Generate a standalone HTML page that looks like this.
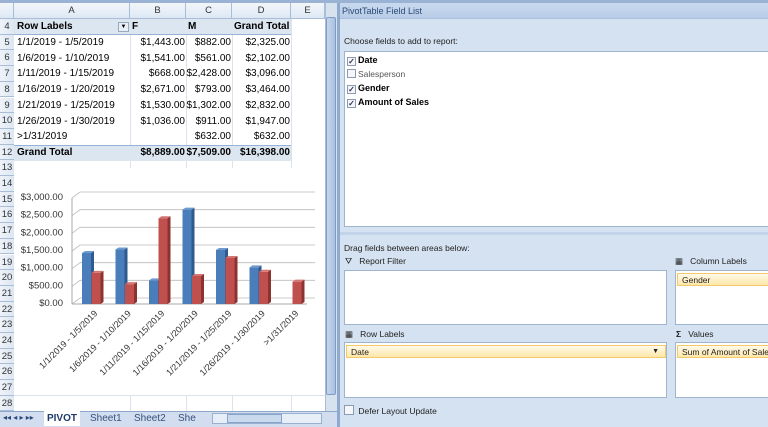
<!DOCTYPE html>
<html><head><meta charset="utf-8"><style>
*{margin:0;padding:0;box-sizing:border-box}
body{width:768px;height:427px;overflow:hidden;background:#c5d6ea;font-family:"Liberation Sans",sans-serif;font-size:10px;position:relative;color:#000}
.a{position:absolute}
.hd{background:linear-gradient(#f3f7fb,#dde8f4);color:#333;text-align:center;font-size:9.5px;line-height:15px;border-right:1px solid #a9bdd6;border-bottom:1px solid #a9bdd6}
.rn{background:linear-gradient(90deg,#eef3f9,#dce6f2);color:#333;font-size:9.5px;width:14px;left:0;text-align:center;border-bottom:1px solid #a9bdd6}
.c{position:absolute;font-size:10px;line-height:15.7px;white-space:nowrap}
.r{text-align:right}
.b{font-weight:bold}
.pn{font-size:8.5px;color:#222;white-space:nowrap}
.box{background:#fff;border:1px solid #9fb4cf}
.fld{background:linear-gradient(#fffaea,#ffe7a8);border:1px solid #f2c96b;font-size:8.5px;line-height:12px;padding-left:4px;color:#222;white-space:nowrap;overflow:hidden}
.cb{width:9px;height:9px;border:1px solid #8a9bb3;background:#f4f6f9;display:inline-block;margin-right:2px;vertical-align:-1px;font-size:8px;line-height:8px;color:#335;text-align:center}
</style></head><body>
<div class="a" style="left:0;top:3px;width:325px;height:408px;background:#fff"></div>
<div class="a" style="left:0;top:3px;width:325px;height:16px;background:#e4ecf6"></div>
<div class="a hd" style="left:0;top:3px;width:14px;height:16px"></div>
<div class="a hd" style="left:14px;top:3px;width:116px;height:16px">A</div>
<div class="a hd" style="left:130px;top:3px;width:56px;height:16px">B</div>
<div class="a hd" style="left:186px;top:3px;width:46px;height:16px">C</div>
<div class="a hd" style="left:232px;top:3px;width:59px;height:16px">D</div>
<div class="a hd" style="left:291px;top:3px;width:34px;height:16px">E</div>
<div id="rows"></div>
<svg class="a" style="left:0;top:0" width="325" height="411">
<g stroke="#dde3ea" stroke-width="1">
<line x1="130.5" y1="19" x2="130.5" y2="168"/><line x1="186.5" y1="19" x2="186.5" y2="168"/><line x1="232.5" y1="19" x2="232.5" y2="168"/><line x1="291.5" y1="19" x2="291.5" y2="168"/>
<line x1="291.5" y1="395" x2="291.5" y2="411"/>
<line x1="130.5" y1="395" x2="130.5" y2="411"/><line x1="186.5" y1="395" x2="186.5" y2="411"/><line x1="232.5" y1="395" x2="232.5" y2="411"/>
<line x1="14" y1="395.5" x2="325" y2="395.5"/>
</g>
</svg>
<div class="a" style="left:14px;top:19px;width:277px;height:16px;background:#dce6f1;border-bottom:1px solid #95b3d7"></div>
<div class="a" style="left:14px;top:145px;width:277px;height:16px;background:#dce6f1;border-top:1px solid #95b3d7"></div>
<div class="a" style="left:118px;top:22px;width:11px;height:10px;background:#e8eef6;border:1px solid #97a8bf;font-size:6px;text-align:center;line-height:8px">▼</div>
<div class="c b" style="left:17px;top:19px">Row Labels</div>
<div class="c b" style="left:132px;top:19px">F</div>
<div class="c b" style="left:188px;top:19px">M</div>
<div class="c b" style="left:234px;top:19px">Grand Total</div>
<div id="data"></div>
<svg class="a" style="left:14px;top:168px" width="311" height="226" font-family="Liberation Sans" font-size="9.5">
<g id="ch"></g>
</svg>
<div class="a" style="left:325px;top:3px;width:12px;height:408px;background:#d7e2ef;border-left:1px solid #a9bdd6"></div>
<div class="a" style="left:326px;top:17px;width:10px;height:378px;background:linear-gradient(90deg,#c6d7ec,#a9c1e0);border:1px solid #7f9cc4;border-radius:2px"></div>
<div class="a" style="left:0;top:411px;width:337px;height:16px;background:#d2def0;border-top:1px solid #8ea8cc"></div>
<div class="a" style="left:3px;top:413px;font-size:8px;color:#2a4a7a">◂◂ ◂ ▸ ▸▸</div>
<div class="a b" style="left:44px;top:411px;width:36px;height:15px;background:#fff;font-size:10px;color:#1f3a6a;text-align:center;line-height:15px">PIVOT</div>
<div class="a" style="left:90px;top:413px;font-size:10px;color:#36507a">Sheet1</div>
<div class="a" style="left:134px;top:413px;font-size:10px;color:#36507a">Sheet2</div>
<div class="a" style="left:178px;top:413px;font-size:10px;color:#36507a">She</div>
<div class="a" style="left:212px;top:413px;width:110px;height:11px;background:#e8eef7;border:1px solid #9ab0cf"></div>
<div class="a" style="left:227px;top:414px;width:55px;height:9px;background:#c9d9ee;border:1px solid #8aa5cb"></div>
<div class="a" style="left:337px;top:0;width:3px;height:427px;background:#8fa9cf"></div>
<div class="a" style="left:0;top:0;width:768px;height:3px;background:#9ab2d4"></div>
<div class="a" style="left:340px;top:3px;width:428px;height:424px;background:#d5e2f1"></div>
<div class="a" style="left:340px;top:3px;width:428px;height:16px;background:linear-gradient(#c9daef,#b7cce7);border-bottom:1px solid #a9c0df"></div>
<div class="a pn" style="left:342px;top:6px;color:#2b4a77;font-size:9px">PivotTable Field List</div>
<div class="a pn" style="left:344px;top:36px">Choose fields to add to report:</div>
<div class="a box" style="left:344px;top:51px;width:430px;height:176px"></div>
<div class="a" style="left:347px;top:53px;font-size:9px;line-height:14px">
<div class="b"><span class="cb">✓</span>Date</div>
<div style="color:#555;font-size:8.5px"><span class="cb"></span>Salesperson</div>
<div class="b"><span class="cb">✓</span>Gender</div>
<div class="b"><span class="cb">✓</span>Amount of Sales</div>
</div>
<div class="a" style="left:340px;top:232px;width:428px;height:3px;background:#c2d4ea"></div>
<div class="a pn" style="left:344px;top:243px">Drag fields between areas below:</div>
<div class="a pn" style="left:345px;top:256px">⛛&nbsp;&nbsp; Report Filter</div>
<div class="a pn" style="left:675px;top:256px">▦&nbsp;&nbsp; Column Labels</div>
<div class="a box" style="left:344px;top:270px;width:323px;height:55px"></div>
<div class="a box" style="left:675px;top:270px;width:100px;height:55px"></div>
<div class="a fld" style="left:677px;top:273px;width:95px;height:13px">Gender</div>
<div class="a pn" style="left:345px;top:329px">▦&nbsp;&nbsp; Row Labels</div>
<div class="a pn" style="left:676px;top:329px"><b>Σ</b>&nbsp;&nbsp; Values</div>
<div class="a box" style="left:344px;top:342px;width:323px;height:56px"></div>
<div class="a box" style="left:675px;top:342px;width:100px;height:56px"></div>
<div class="a fld" style="left:346px;top:345px;width:320px;height:13px">Date<span style="position:absolute;right:6px;font-size:7px">▼</span></div>
<div class="a fld" style="left:677px;top:345px;width:95px;height:13px">Sum of Amount of Sales</div>
<div class="a pn" style="left:344px;top:405px"><span class="cb" style="width:10px;height:10px"></span> Defer Layout Update</div>
<script>
var h='';for(var n=4;n<=28;n++){var t=19+(n-4)*15.7;h+='<div class="a rn" style="top:'+t+'px;height:15.7px;line-height:15px">'+n+'</div>';}
document.getElementById('rows').innerHTML=h;
var d=[["1/1/2019 - 1/5/2019","$1,443.00","$882.00","$2,325.00"],["1/6/2019 - 1/10/2019","$1,541.00","$561.00","$2,102.00"],["1/11/2019 - 1/15/2019","$668.00","$2,428.00","$3,096.00"],["1/16/2019 - 1/20/2019","$2,671.00","$793.00","$3,464.00"],["1/21/2019 - 1/25/2019","$1,530.00","$1,302.00","$2,832.00"],["1/26/2019 - 1/30/2019","$1,036.00","$911.00","$1,947.00"],[">1/31/2019","","$632.00","$632.00"],["Grand Total","$8,889.00","$7,509.00","$16,398.00"]];
h='';d.forEach(function(r,i){var t=35+i*15.7;var b=i==7?' b':'';
h+='<div class="c'+b+'" style="left:17px;top:'+t+'px">'+r[0]+'</div>';
h+='<div class="c r'+b+'" style="left:130px;width:55px;top:'+t+'px">'+r[1]+'</div>';
h+='<div class="c r'+b+'" style="left:186px;width:45px;top:'+t+'px">'+r[2]+'</div>';
h+='<div class="c r'+b+'" style="left:232px;width:58px;top:'+t+'px">'+r[3]+'</div>';});
document.getElementById('data').innerHTML=h;
var g='';var y0=134,sc=106/3000,x0=58;
for(var k=0;k<=6;k++){var y=y0-k*500*sc-4;g+='<polyline points="'+(x0)+','+(y+6)+' '+(x0+8)+','+y+' '+(x0+243)+','+y+'" fill="none" stroke="#bbb" stroke-width="0.8"/>';
g+='<text x="49" y="'+(y+8)+'" text-anchor="end" fill="#333">$'+(k*500).toLocaleString('en-US')+'.00</text>';}
g+='<line x1="'+x0+'" y1="'+(y0+2)+'" x2="'+(x0)+'" y2="'+(y0+2-106)+'" stroke="#aaa"/>';
g+='<line x1="'+x0+'" y1="'+(y0+2)+'" x2="'+(x0+235)+'" y2="'+(y0+2)+'" stroke="#aaa"/>';
var F=[1443,1541,668,2671,1530,1036,0],M=[882,561,2428,793,1302,911,632];
var L=["1/1/2019 - 1/5/2019","1/6/2019 - 1/10/2019","1/11/2019 - 1/15/2019","1/16/2019 - 1/20/2019","1/21/2019 - 1/25/2019","1/26/2019 - 1/30/2019",">1/31/2019"];
function bar(x,v,c1,c2,c3){if(!v)return '';var hh=v*sc,yb=y0+2,yt=yb-hh;
return '<rect x="'+x+'" y="'+yt+'" width="9" height="'+hh+'" fill="'+c1+'"/><polygon points="'+(x+9)+','+yt+' '+(x+12)+','+(yt-2)+' '+(x+12)+','+(yb-2)+' '+(x+9)+','+yb+'" fill="'+c2+'"/><polygon points="'+x+','+yt+' '+(x+3)+','+(yt-2)+' '+(x+12)+','+(yt-2)+' '+(x+9)+','+yt+'" fill="'+c3+'"/>';}
for(var i=0;i<7;i++){var x=68+i*33.5;g+=bar(x,F[i],'#4a7ebb','#2f5a8f','#6d9ad0')+bar(x+9.5,M[i],'#c0504d','#8c3331','#d67471');
var cx=x+16;g+='<text transform="translate('+cx+',146) rotate(-45)" text-anchor="end" fill="#333" font-size="9">'+L[i]+'</text>';}
document.getElementById('ch').innerHTML=g;
</script>
</body></html>
